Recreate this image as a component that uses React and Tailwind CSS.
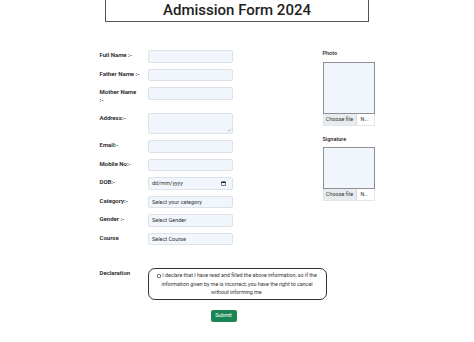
import React from 'react';

const Field = ({ label, children, className = '' }) => (
  <div className={`flex items-start mb-[6px] ${className}`}>
    <div className="shrink-0 w-[40px] mr-[8px] pt-[1px] text-[6px] leading-[7.5px] font-semibold text-[#222] whitespace-nowrap">{label}</div>
    {children}
  </div>
);

const Input = ({ text, icon }) => (
  <div className="shrink-0 w-[85px] h-[12.5px] bg-[#f1f6fc] border border-[#dde2e8] rounded-[2px] flex items-center px-[3.5px] text-[5.5px] text-[#333]">
    <span className="flex-1">{text}</span>
    {icon}
  </div>
);

const Calendar = () => (
  <svg width="5" height="5" viewBox="0 0 10 10" className="mr-[2px]">
    <rect x="1" y="1.5" width="8" height="7.5" rx="1" fill="none" stroke="#222" strokeWidth="1.2" />
    <rect x="1" y="1.5" width="8" height="2.5" fill="#222" />
  </svg>
);

const FileRow = () => (
  <div className="flex h-[12px] text-[5.5px] text-[#333] border border-[#e2e5e8] border-t-0">
    <div className="w-[33px] bg-[#e9ecef] flex items-center justify-center border-r border-[#d6d9dc]">Choose file</div>
    <div className="flex items-center pl-[4px]">N...</div>
  </div>
);

export default function App() {
  return (
    <div className="w-[474px] h-[342px] bg-white overflow-hidden flex flex-col" style={{ fontFamily: 'Roboto, "Liberation Sans", sans-serif' }}>
      {/* Header */}
      <div className="mx-auto w-[264px] -mt-[10px] border border-[#555] pt-[11px] pb-[3px] text-center text-[15px] leading-[16px] font-medium text-[#222]">
        Admission Form 2024
      </div>

      <div className="w-[275px] mx-auto mt-[28px] flex">
        {/* Left form column */}
        <div className="w-[134px] shrink-0">
          <Field label="Full Name :-"><Input /></Field>
          <Field label="Father Name :-"><Input /></Field>
          <Field label={<>Mother Name<br />:-</>} className="mb-[10px]"><Input /></Field>
          <Field label="Address:-">
            <div className="relative shrink-0 w-[85px] h-[21px] bg-[#f1f6fc] border border-[#dde2e8] rounded-[2px]">
              <svg width="4" height="4" viewBox="0 0 8 8" className="absolute right-[1px] bottom-[1px]">
                <path d="M7 2 L2 7 M7 5 L5 7" stroke="#888" strokeWidth="1" />
              </svg>
            </div>
          </Field>
          <Field label="Email:-"><Input /></Field>
          <Field label="Mobile No:-"><Input /></Field>
          <Field label="DOB:-"><Input text="dd/mm/yyyy" icon={<Calendar />} /></Field>
          <Field label="Category:-"><Input text="Select your category" /></Field>
          <Field label="Gender :-"><Input text="Select Gender" /></Field>
          <Field label="Course"><Input text="Select Course" /></Field>

          <div className="flex items-start mt-[23px]">
            <div className="shrink-0 w-[40px] mr-[8px] pt-[1px] text-[6px] leading-[7.5px] font-semibold text-[#222]">Declaration</div>
            <div className="shrink-0 w-[179px] h-[32px] border-[1.5px] border-[#333] rounded-[7px] flex items-center justify-center px-[4px] text-center text-[5.3px] leading-[8.5px] text-[#333]">
              <p>
                <span className="inline-block w-[4px] h-[4px] border border-[#777] rounded-[1px] mr-[1px] align-[-0.3px]" />
                I declare that I have read and filled the above information, so if the information given by me is incorrect, you have the right to cancel without informing me.
              </p>
            </div>
          </div>

          <div className="ml-[111px] mt-[10px] w-[26px] h-[12px] bg-[#198754] rounded-[2px] flex items-center justify-center text-[5.3px] text-white">
            Submit
          </div>
        </div>

        {/* Right column */}
        <div className="ml-auto w-[52px]">
          <div className="text-[5.5px] leading-[7px] font-medium text-[#222] mb-[5px]">Photo</div>
          <div className="h-[52px] bg-[#f1f6fc] border border-[#8c9197]" />
          <FileRow />
          <div className="mt-[10px] text-[5.5px] leading-[7px] font-medium text-[#222] mb-[4px]">Signature</div>
          <div className="h-[42px] bg-[#f1f6fc] border border-[#8c9197]" />
          <FileRow />
        </div>
      </div>
    </div>
  );
}
